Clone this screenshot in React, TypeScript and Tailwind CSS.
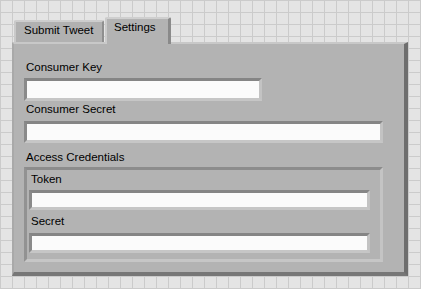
const font = { fontFamily: '"Liberation Sans", Arial, sans-serif' };

function Field({ className }: { className: string }) {
  return (
    <div
      className={`border-[3px] border-t-[#858585] border-l-[#8a8a8a] border-r-[#c3c3c3] border-b-[#c6c6c6] bg-[#fbfbfb] ${className}`}
    />
  );
}

function Label({ text, className }: { text: string; className: string }) {
  return (
    <div className={`h-[13px] text-[11.5px] leading-[13px] text-black ${className}`}>
      {text}
    </div>
  );
}

export default function App() {
  return (
    <div
      style={font}
      className="h-[289px] w-[421px] overflow-hidden bg-[#e4e4e4] bg-[linear-gradient(to_right,#cbcbcb_1px,transparent_1px),linear-gradient(to_bottom,#cbcbcb_1px,transparent_1px)] bg-size-[12px_12px] bg-position-[0px_0px] pl-[12px] pt-[17px]"
    >
      {/* tabs */}
      <div className="flex items-end">
        <div className="ml-[2px] h-[22px] w-[90px] rounded-tl-[2px] rounded-tr-[2px] border-t-[2px] border-l-[2px] border-r-[2px] border-t-[#cdcdcd] border-l-[#c9c9c9] border-r-[#8f8f8f] bg-[#b1b1b1] pl-[8px] pt-[2px] text-[11.5px] leading-[13px] text-black">
          Submit Tweet
        </div>
        <div className="relative z-10 -mb-[2px] ml-[1px] h-[27px] w-[66px] rounded-tl-[2px] rounded-tr-[2px] border-t-[2px] border-l-[2px] border-r-[3px] border-t-[#cfcfcf] border-l-[#cbcbcb] border-r-[#8a8a8a] bg-[#b3b3b3] pl-[7px] pt-[2px] text-[11.5px] leading-[13px] text-black">
          Settings
        </div>
      </div>

      {/* panel */}
      <div className="flex h-[234px] w-[396px] flex-col border-t-[2px] border-l-[2px] border-r-[4px] border-b-[4px] border-t-[#c8c8c8] border-l-[#a9a9a9] border-r-[#6e6e6e] border-b-[#777777] bg-[#b3b3b3] pl-[10px]">
        <Label text="Consumer Key" className="mt-[17px] pl-[2px]" />
        <Field className="mt-[4px] h-[23px] w-[238px]" />
        <Label text="Consumer Secret" className="mt-[2px] pl-[2px]" />
        <Field className="mt-[5px] h-[22px] w-[359px]" />
        <Label text="Access Credentials" className="mt-[8px] pl-[2px]" />

        <div className="mt-[3px] flex h-[95px] w-[359px] flex-col border-[3px] border-t-[#8c8c8c] border-l-[#929292] border-r-[#c4c4c4] border-b-[#c6c6c6] bg-[#b3b3b3] pl-[2px]">
          <Label text="Token" className="mt-[3px] pl-[2px]" />
          <Field className="mt-[4px] h-[20px] w-[341px]" />
          <Label text="Secret" className="mt-[5px] pl-[2px]" />
          <Field className="mt-[5px] h-[20px] w-[341px]" />
        </div>
      </div>
    </div>
  );
}
